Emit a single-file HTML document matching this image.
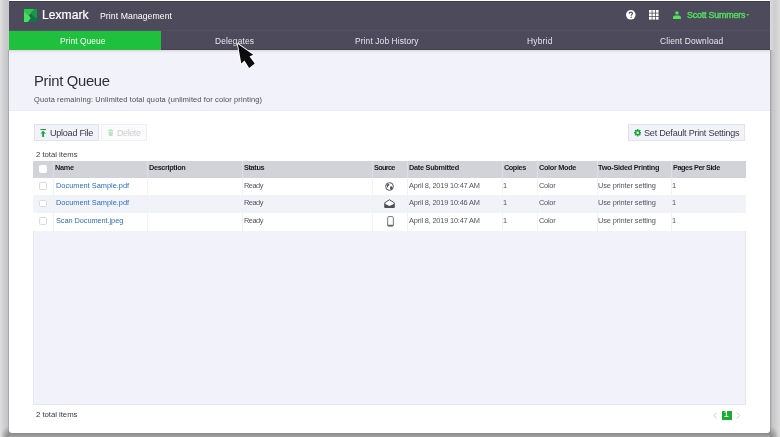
<!DOCTYPE html>
<html><head><meta charset="utf-8"><title>Print Management</title>
<style>
*{box-sizing:border-box;margin:0;padding:0}
html,body{width:780px;height:437px;overflow:hidden}
body{background:#d0d0d3;font-family:"Liberation Sans",sans-serif;position:relative}
.a{position:absolute}
.t{position:absolute;white-space:nowrap;will-change:transform}
#sl{left:0;top:0;width:9px;height:437px;background:linear-gradient(90deg,#dedede 0,#cfcfd1 45%,#c4c4c7 85%,#a8a8ac 95%)}
#slt{left:0;top:0;width:9px;height:50px;background:linear-gradient(90deg,#dedede 0,#cfcfd1 45%,#c6c6c9 80%,#cbcbce 100%)}
#sr{left:770px;top:0;width:10px;height:437px;background:linear-gradient(270deg,#dcdcdc 0,#cfcfd1 45%,#c4c4c7 80%,#a6a6aa 95%)}
#srt{left:770px;top:0;width:10px;height:50px;background:linear-gradient(270deg,#dcdcdc 0,#cdcdd0 50%,#d4d4d7 80%,#dadadd 100%)}
#sb{left:9px;top:431px;width:761px;height:6px;background:linear-gradient(180deg,#8c8c8c 40%,#a2a2a2 100%)}
#sbl{left:0;top:422px;width:9px;height:15px;background:radial-gradient(ellipse 8px 11px at 100% 100%,rgba(138,138,138,1) 0,rgba(138,138,138,.75) 35%,rgba(150,150,150,0) 100%)}
#sbr{left:770px;top:422px;width:10px;height:15px;background:radial-gradient(ellipse 9px 11px at 0 100%,rgba(138,138,138,1) 0,rgba(138,138,138,.75) 35%,rgba(150,150,150,0) 100%)}
#win{left:9px;top:0;width:761px;height:433px;background:#fff;overflow:hidden;border-radius:0 0 3px 3px}
#hdr{left:0;top:1px;width:761px;height:49.3px;background:#4d4b5b;border-top:1px solid #403e50;border-bottom:1px solid #434152}
#sep{left:0;top:30px;width:761px;height:1px;background:#545262}
#tab1{left:0;top:31px;width:152.3px;height:19.3px;background:#1ec03d}
#band{left:0;top:50px;width:761px;height:60.5px;border-bottom:1px solid #ebebf1;background:linear-gradient(180deg,#d6d6dc 0,#e6e6ec 1.5px,#f0f0f6 3px,#f2f3fa 4.5px)}
.btn{height:17.2px;top:124.2px;background:#f2f3fa;border:1px solid #e2e2ea}
#grid{left:24px;top:161px;width:713px;height:243.5px;background:#f1f2fa;box-shadow:inset 0 -1px 0 #e6e6ee,inset -1px 0 0 #e6e6ee,inset 1px 0 0 #e6e6ee}
#gh{left:0;top:0;width:713px;height:16.8px;background:#d2d2d9}
.row{left:0;width:713px;height:17.6px;background:#fff}
.alt{background:#f2f2f9}
.cs{top:0;width:1px;height:69.6px;background:linear-gradient(180deg,#dedee4 0,#dedee4 16.8px,#f1f1f6 16.8px)}
.cb{left:5.7px;width:8.5px;height:7.5px;background:#fff;border:1px solid #dadae0;border-radius:1.5px}
</style></head><body>
<div class="a" id="sl"></div><div class="a" id="slt"></div><div class="a" id="sr"></div><div class="a" id="srt"></div><div class="a" id="sb"></div><div class="a" id="sbl"></div><div class="a" id="sbr"></div>
<div class="a" id="win">
 <div class="a" id="hdr"></div>
 <div class="a" id="sep"></div>
 <div class="a" id="tab1"></div>
 <div class="a" id="band"></div>
 <!-- logo -->
 <svg class="a" style="left:14.9px;top:8.5px" width="13.5" height="13.3" viewBox="0 0 14 14" preserveAspectRatio="none"><polygon points="0,0 10.8,0 7,4.800 5,6.800 0,2.600" fill="#24cc48"/><polygon points="10.8,0 14,0 14,10.8 9.200,7.200 7,4.800" fill="#139a48"/><polygon points="14,10.800 14,14 3.800,14 7,9.400 9.200,7.200" fill="#0a7848"/><polygon points="3.800,14 0,14 0,2.600 5,6.800 7,9.400" fill="#40e460"/></svg>
 <!-- help -->
 <svg class="a" style="left:617.3px;top:10px" width="9.6" height="9.6" viewBox="0 0 20 20"><circle cx="10" cy="10" r="10" fill="#fff"/><path d="M6.6 7.6c0-2 1.5-3.3 3.5-3.3s3.4 1.2 3.4 3c0 2.3-2.6 2.4-2.6 4.6" fill="none" stroke="#4d4b5b" stroke-width="2.4"/><circle cx="10.8" cy="15.2" r="1.5" fill="#4d4b5b"/></svg>
 <!-- apps -->
 <svg class="a" style="left:640.200px;top:10px" width="9.600" height="9.600" viewBox="0 0 10 10"><g fill="#fff"><rect x="0" y="0" width="2.800" height="2.800"/><rect x="3.600" y="0" width="2.800" height="2.800"/><rect x="7.200" y="0" width="2.800" height="2.800"/><rect x="0" y="3.600" width="2.800" height="2.800"/><rect x="3.600" y="3.600" width="2.800" height="2.800"/><rect x="7.200" y="3.600" width="2.800" height="2.800"/><rect x="0" y="7.200" width="2.800" height="2.800"/><rect x="3.600" y="7.200" width="2.800" height="2.800"/><rect x="7.200" y="7.200" width="2.800" height="2.800"/></g></svg>
 <!-- user -->
 <svg class="a" style="left:664px;top:10.700px" width="7.900" height="8.500" viewBox="0 0 16 17"><circle cx="8" cy="3.700" r="3.500" fill="#4fe45c"/><path d="M0 17v-3.800c0-2.800 1.800-4.200 4.300-4.200h7.400c2.500 0 4.300 1.400 4.300 4.200v3.800z" fill="#4fe45c"/></svg>
 <!-- caret -->
 <svg class="a" style="left:737.2px;top:13.8px" width="3.4" height="2" viewBox="0 0 4 2"><polygon points="0,0 4,0 2,2" fill="#4fe45c"/></svg>
 <!-- buttons -->
 <div class="a btn" style="left:25px;width:64.6px"></div>
 <div class="a btn" style="left:92.4px;width:45.2px;background:#fbfbfd;border-color:#f0f0f4"></div>
 <div class="a btn" style="left:619.3px;width:116.8px"></div>
 <svg class="a" style="left:30.9px;top:128.8px" width="6.3" height="8.2" viewBox="0 0 12 18"><g fill="#17a535"><rect x="0" y="0" width="12" height="2.4"/><polygon points="6,3.6 12,10 8,10 8,18 4,18 4,10 0,10"/></g></svg>
 <svg class="a" style="left:98.9px;top:129.3px" width="5.4" height="7.2" viewBox="0 0 10 13"><g fill="#b5e6bf"><rect x="0" y="1.5" width="10" height="2"/><rect x="3" y="0" width="4" height="2"/><path d="M1 4.500h8l-.6 8.500h-6.800z"/></g></svg>
 <svg class="a" style="left:625px;top:129.4px" width="7.4" height="7.4" viewBox="0 0 20 20"><g fill="#17a535"><circle cx="10" cy="10" r="7"/><g id="tt"><rect x="8" y="0" width="4" height="20" rx="1"/></g><rect x="8" y="0" width="4" height="20" rx="1" transform="rotate(45 10 10)"/><rect x="8" y="0" width="4" height="20" rx="1" transform="rotate(90 10 10)"/><rect x="8" y="0" width="4" height="20" rx="1" transform="rotate(135 10 10)"/></g><circle cx="10" cy="10" r="3.400" fill="#f3f3f8"/></svg>
 <!-- grid -->
 <div class="a" id="grid">
  <div class="a" id="gh"></div>
  <div class="a row" style="top:16.8px"></div>
  <div class="a row alt" style="top:34.4px"></div>
  <div class="a row" style="top:52px"></div>
  <div class="a cs" style="left:20.1px"></div><div class="a cs" style="left:113.5px"></div><div class="a cs" style="left:208.5px"></div><div class="a cs" style="left:339.1px"></div><div class="a cs" style="left:373.5px"></div><div class="a cs" style="left:469.1px"></div><div class="a cs" style="left:503.5px"></div><div class="a cs" style="left:563.5px"></div><div class="a cs" style="left:637.5px"></div>
  <div class="a cb" style="top:3.6px;height:8px;border-color:#fff"></div>
  <div class="a cb" style="top:21px"></div>
  <div class="a cb" style="top:38.6px"></div>
  <div class="a cb" style="top:56.2px"></div>
  <!-- source icons -->
  <svg class="a" style="left:352px;top:20.5px" width="9" height="9" viewBox="0 0 20 20"><circle cx="10" cy="10" r="8.600" fill="#fff" stroke="#4e4e56" stroke-width="2.200"/><path d="M3.500 6.500l4-2.500 2.500 1.500-1 2.500-2.500 1 .5 2.500-2 .5zM11 10.500l4-1 2 2-2 4.500-3 1-.5-3z" fill="#4e4e56"/></svg>
  <svg class="a" style="left:351.4px;top:38.2px" width="11" height="9" viewBox="0 0 22 18"><path d="M1.500 7.500l9.500-6 9.500 6v9.500h-19z" fill="#fff" stroke="#4e4e56" stroke-width="2"/><path d="M1.500 9.500l9.500 4.500 9.500-4.500v7.500h-19z" fill="#4e4e56"/></svg>
  <svg class="a" style="left:353.5px;top:55px" width="7" height="10.800" viewBox="0 0 14 22"><rect x="1.200" y="1.200" width="11.600" height="19.600" rx="2.400" fill="#fff" stroke="#66666e" stroke-width="1.800"/><rect x="1.200" y="17.600" width="11.600" height="3" rx="1" fill="#66666e"/></svg>
 </div>
 <!-- pager -->
 <svg class="a" style="left:703.6px;top:412.4px" width="4.6" height="7" viewBox="0 0 5 8"><polyline points="4.300,.5 .8,4 4.300,7.500" fill="none" stroke="#c9c9cf" stroke-width="1.100"/></svg>
 <div class="a" style="left:712.7px;top:410.5px;width:10px;height:9.4px;background:#17ad33"></div>
 <svg class="a" style="left:726.8px;top:412.4px" width="4.6" height="7" viewBox="0 0 5 8"><polyline points=".7,.5 4.200,4 .7,7.500" fill="none" stroke="#c9c9cf" stroke-width="1.100"/></svg>
 <span class="t" style="left:715.3px;top:411.4px;font-size:8.2px;line-height:8.4px;color:#fff;font-weight:700">1</span>
<span class="t" style="left:32.80px;top:8.96px;font-size:12.1px;line-height:12.1px;color:#fff;-webkit-text-stroke:.2px #fff;letter-spacing:0.038px;">Lexmark</span>
<span class="t" style="left:91.00px;top:11.64px;font-size:8.7px;line-height:8.7px;color:#fff;letter-spacing:0.067px;">Print Management</span>
<span class="t" style="left:677.70px;top:10.97px;font-size:8.9px;line-height:8.9px;color:#4fe45c;-webkit-text-stroke:.35px #4fe45c;letter-spacing:-0.189px;">Scott Summers</span>
<span class="t" style="left:51.00px;top:36.79px;font-size:8.4px;line-height:8.4px;color:#fff;letter-spacing:0.060px;">Print Queue</span>
<span class="t" style="left:206.30px;top:36.79px;font-size:8.4px;line-height:8.4px;color:#e6e6ec;letter-spacing:0.160px;">Delegates</span>
<span class="t" style="left:346.30px;top:36.79px;font-size:8.4px;line-height:8.4px;color:#e6e6ec;letter-spacing:0.123px;">Print Job History</span>
<span class="t" style="left:517.70px;top:36.79px;font-size:8.4px;line-height:8.4px;color:#e6e6ec;letter-spacing:0.219px;">Hybrid</span>
<span class="t" style="left:650.70px;top:36.79px;font-size:8.4px;line-height:8.4px;color:#e6e6ec;letter-spacing:0.157px;">Client Download</span>
<span class="t" style="left:25.00px;top:73.77px;font-size:14.8px;line-height:14.8px;color:#2f2f38;letter-spacing:-0.297px;">Print Queue</span>
<span class="t" style="left:25.00px;top:95.84px;font-size:7.4px;line-height:7.4px;color:#4a4a52;letter-spacing:0.151px;">Quota remaining: Unlimited total quota (unlimited for color printing)</span>
<span class="t" style="left:40.90px;top:128.70px;font-size:9.1px;line-height:9.1px;color:#3a3a44;letter-spacing:-0.270px;">Upload File</span>
<span class="t" style="left:108.30px;top:128.70px;font-size:9.1px;line-height:9.1px;color:#cfcfd4;letter-spacing:-0.459px;">Delete</span>
<span class="t" style="left:635.00px;top:128.70px;font-size:9.1px;line-height:9.1px;color:#3a3a44;letter-spacing:-0.240px;">Set Default Print Settings</span>
<span class="t" style="left:26.80px;top:150.58px;font-size:7.7px;line-height:7.7px;color:#3a3a44;letter-spacing:0.004px;">2 total items</span>
<span class="t" style="left:26.80px;top:411.10px;font-size:7.8px;line-height:7.8px;color:#3a3a44;letter-spacing:-0.046px;">2 total items</span>
<span class="t" style="left:46.40px;top:164.32px;font-size:7.3px;line-height:7.3px;color:#1c1c24;font-weight:700;letter-spacing:-0.292px;">Name</span>
<span class="t" style="left:140.10px;top:164.32px;font-size:7.3px;line-height:7.3px;color:#1c1c24;font-weight:700;letter-spacing:-0.344px;">Description</span>
<span class="t" style="left:235.10px;top:164.32px;font-size:7.3px;line-height:7.3px;color:#1c1c24;font-weight:700;letter-spacing:-0.343px;">Status</span>
<span class="t" style="left:365.30px;top:164.32px;font-size:7.3px;line-height:7.3px;color:#1c1c24;font-weight:700;letter-spacing:-0.670px;">Source</span>
<span class="t" style="left:400.40px;top:164.32px;font-size:7.3px;line-height:7.3px;color:#1c1c24;font-weight:700;letter-spacing:-0.263px;">Date Submitted</span>
<span class="t" style="left:495.00px;top:164.32px;font-size:7.3px;line-height:7.3px;color:#1c1c24;font-weight:700;letter-spacing:-0.426px;">Copies</span>
<span class="t" style="left:530.30px;top:164.32px;font-size:7.3px;line-height:7.3px;color:#1c1c24;font-weight:700;letter-spacing:-0.305px;">Color Mode</span>
<span class="t" style="left:589.00px;top:164.32px;font-size:7.3px;line-height:7.3px;color:#1c1c24;font-weight:700;letter-spacing:-0.267px;">Two-Sided Printing</span>
<span class="t" style="left:663.90px;top:164.32px;font-size:7.3px;line-height:7.3px;color:#1c1c24;font-weight:700;letter-spacing:-0.426px;">Pages Per Side</span>
<span class="t" style="left:46.70px;top:181.54px;font-size:7.4px;line-height:7.4px;color:#2a6fc0;letter-spacing:-0.001px;">Document Sample.pdf</span>
<span class="t" style="left:235.30px;top:181.54px;font-size:7.4px;line-height:7.4px;color:#55555e;letter-spacing:-0.494px;">Ready</span>
<span class="t" style="left:400.10px;top:181.54px;font-size:7.4px;line-height:7.4px;color:#55555e;letter-spacing:-0.185px;">April 8, 2019 10:47 AM</span>
<span class="t" style="left:494.20px;top:181.54px;font-size:7.4px;line-height:7.4px;color:#55555e;">1</span>
<span class="t" style="left:530.30px;top:181.54px;font-size:7.4px;line-height:7.4px;color:#55555e;letter-spacing:-0.243px;">Color</span>
<span class="t" style="left:589.20px;top:181.54px;font-size:7.4px;line-height:7.4px;color:#55555e;letter-spacing:-0.116px;">Use printer setting</span>
<span class="t" style="left:663.00px;top:181.54px;font-size:7.4px;line-height:7.4px;color:#55555e;">1</span>
<span class="t" style="left:46.70px;top:199.04px;font-size:7.4px;line-height:7.4px;color:#2a6fc0;letter-spacing:-0.001px;">Document Sample.pdf</span>
<span class="t" style="left:235.30px;top:199.04px;font-size:7.4px;line-height:7.4px;color:#55555e;letter-spacing:-0.494px;">Ready</span>
<span class="t" style="left:400.10px;top:199.04px;font-size:7.4px;line-height:7.4px;color:#55555e;letter-spacing:-0.185px;">April 8, 2019 10:46 AM</span>
<span class="t" style="left:494.20px;top:199.04px;font-size:7.4px;line-height:7.4px;color:#55555e;">1</span>
<span class="t" style="left:530.30px;top:199.04px;font-size:7.4px;line-height:7.4px;color:#55555e;letter-spacing:-0.243px;">Color</span>
<span class="t" style="left:589.20px;top:199.04px;font-size:7.4px;line-height:7.4px;color:#55555e;letter-spacing:-0.116px;">Use printer setting</span>
<span class="t" style="left:663.00px;top:199.04px;font-size:7.4px;line-height:7.4px;color:#55555e;">1</span>
<span class="t" style="left:46.70px;top:216.64px;font-size:7.4px;line-height:7.4px;color:#2a6fc0;letter-spacing:-0.077px;">Scan Document.jpeg</span>
<span class="t" style="left:235.30px;top:216.64px;font-size:7.4px;line-height:7.4px;color:#55555e;letter-spacing:-0.494px;">Ready</span>
<span class="t" style="left:400.10px;top:216.64px;font-size:7.4px;line-height:7.4px;color:#55555e;letter-spacing:-0.185px;">April 8, 2019 10:47 AM</span>
<span class="t" style="left:494.20px;top:216.64px;font-size:7.4px;line-height:7.4px;color:#55555e;">1</span>
<span class="t" style="left:530.30px;top:216.64px;font-size:7.4px;line-height:7.4px;color:#55555e;letter-spacing:-0.243px;">Color</span>
<span class="t" style="left:589.20px;top:216.64px;font-size:7.4px;line-height:7.4px;color:#55555e;letter-spacing:-0.116px;">Use printer setting</span>
<span class="t" style="left:663.00px;top:216.64px;font-size:7.4px;line-height:7.4px;color:#55555e;">1</span>
 <!-- cursor -->
 <svg class="a" style="left:226px;top:41px" width="24" height="30" viewBox="0 0 24 30"><polygon points="2.800,3.100 6.300,22.500 9.400,19.400 14.200,27.100 19.700,22.500 14.500,15.500 18.200,13.700" fill="#0c0c0e" stroke="#fff" stroke-width="1.800" stroke-linejoin="round" paint-order="stroke"/></svg>
</div>
</body></html>
